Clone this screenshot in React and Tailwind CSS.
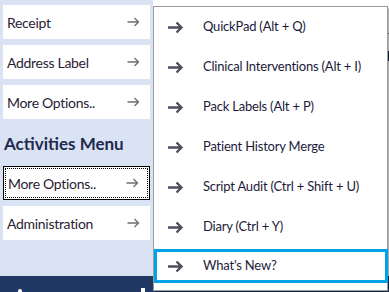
const font = { fontFamily: 'Lato, "Noto Sans", Arial, sans-serif' }

const quick = ['Receipt', 'Address Label', 'More Options..']

const menuItems = [
  'QuickPad (Alt + Q)',
  'Clinical Interventions (Alt + I)',
  'Pack Labels (Alt + P)',
  'Patient History Merge',
  'Script Audit (Ctrl + Shift + U)',
  'Diary (Ctrl + Y)',
]

function ThinArrow() {
  return (
    <svg width="13" height="10" viewBox="0 0 13 10" className="shrink-0">
      <path d="M0.5 5H11.5M7.5 1L11.5 5L7.5 9" fill="none" stroke="#6f6f6f" strokeWidth="1.3" />
    </svg>
  )
}

function BoldArrow() {
  return (
    <svg width="17" height="13" viewBox="0 0 17 13" className="shrink-0">
      <path d="M1 6.5H14.5M9.5 1.5L14.5 6.5L9.5 11.5" fill="none" stroke="#4f4d5e" strokeWidth="2.4" />
    </svg>
  )
}

function SideButton({ label, focused }) {
  return (
    <div
      className={`h-[34px] shrink-0 bg-white flex items-center justify-between pl-[4px] pr-[10px] ${focused ? 'border border-black outline-1 outline-dotted outline-black -outline-offset-[3px]' : ''}`}
    >
      <span className="text-[14px] tracking-[-0.3px] text-[#2a1c34]">{label}</span>
      <ThinArrow />
    </div>
  )
}

export default function App() {
  return (
    <div className="relative w-[389px] h-[292px] overflow-hidden bg-white" style={font}>
      <div className="flex h-[276px]">
        <div className="w-[153px] h-[276px] bg-[#dae3f3] px-[3px] pt-[5px]">
          <div className="flex flex-col gap-[6px]">
            {quick.map((q) => <SideButton key={q} label={q} />)}
          </div>
          <div className="h-[47px] flex items-center pl-[1px] pt-[3px]">
            <span className="text-[17px] font-bold text-[#1f2a4e]">Activities Menu</span>
          </div>
          <div className="flex flex-col gap-[6px]">
            <SideButton label="More Options.." focused />
            <SideButton label="Administration" />
          </div>
        </div>
        <div className="flex-1 bg-white flex flex-col items-end">
          <div className="mt-[33px] w-[6px] h-[1px] bg-[#8a8a8a]" />
          <div className="mt-[17px] w-[3px] h-[10px] bg-[#1a2a4a]" />
        </div>
      </div>
      <div className="h-[16px] bg-[#1f3864] relative">
        <div className="absolute left-[18px] top-[13px] w-[4px] h-[3px] rounded-t-full bg-white" />
        <div className="absolute left-[141px] top-[12px] w-[4px] h-[4px] bg-white" />
      </div>

      <div className="absolute left-[153px] top-[6px] w-[235px] h-[285px] bg-white border border-[#9c9c9c] shadow-[2px_2px_2px_rgba(0,0,0,0.35)] flex flex-col">
        {menuItems.map((m) => (
          <div key={m} className="h-[40px] flex items-center pl-[13px] shrink-0">
            <BoldArrow />
            <span className="ml-[19px] text-[13px] tracking-[-0.2px] text-[#1c1a3a]">{m}</span>
          </div>
        ))}
        <div className="mt-[2px] h-[34px] border-[3px] border-[#00a2e8] flex items-center pl-[10px] shrink-0 -mr-px">
          <BoldArrow />
          <span className="ml-[19px] text-[13px] tracking-[-0.2px] text-[#1c1a3a]">What's New?</span>
        </div>
      </div>
    </div>
  )
}
